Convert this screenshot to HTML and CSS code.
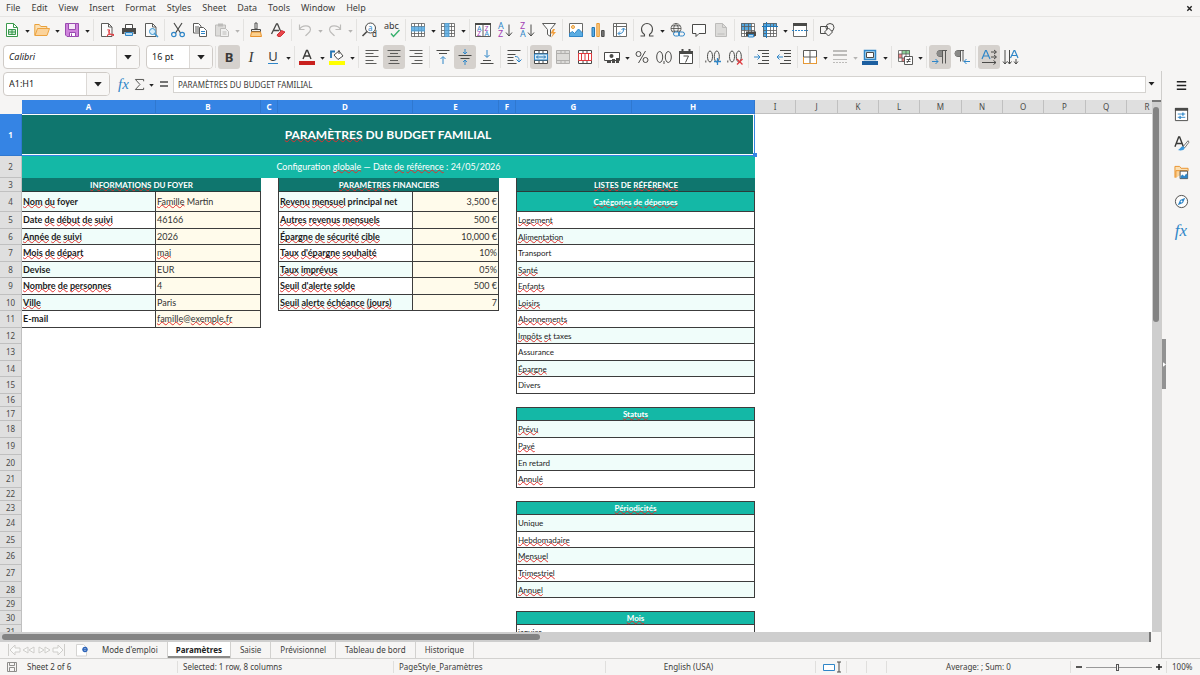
FILE: index.html
```html
<!DOCTYPE html>
<html lang="fr">
<head>
<meta charset="utf-8">
<title>Budget familial</title>
<link rel="stylesheet" href="styles.css">
</head>
<body>
<svg class="defs" aria-hidden="true">
  <symbol id="caret" viewBox="0 0 6 4"><path d="M0 0h6L3 3.6z" fill="currentColor"/></symbol>
  <symbol id="grid" viewBox="0 0 16 16"><path d="M1.500 1.500h13v13h-13zM1.500 4.500h13M1.500 8.500h13M1.500 11.500h13M4.500 1.500v13M8.500 1.500v13M11.500 1.500v13" fill="none" stroke="#5c5c5a" stroke-width=".800"/></symbol>
</svg>

<nav class="menubar">
  <button>File</button><button>Edit</button><button>View</button><button>Insert</button><button>Format</button><button>Styles</button><button>Sheet</button><button>Data</button><button>Tools</button><button>Window</button><button>Help</button>
  <button class="close" aria-label="Close"><svg viewBox="0 0 8 8"><path d="M1.500 1.500l5 5M6.500 1.500l-5 5" stroke="#222" stroke-width="1.600"/></svg></button>
</nav>

<div class="toolbar standard">
  <button class="tool" aria-label="New"><svg viewBox="0 0 16 16"><path d="M2.500 1.500h7l4 4v9h-11z" fill="#fff" stroke="#3c9a4c"/><path d="M9.500 1.500v4h4" fill="none" stroke="#3c9a4c"/><path d="M4.500 7.500h7v5h-7zM4.500 10h7M8 7.500v5" fill="#c9ecd0" stroke="#2b8f3f" stroke-width=".900"/></svg></button><button class="drop" aria-label="New options"><svg><use href="#caret"/></svg></button>
  <button class="tool" aria-label="Open"><svg viewBox="0 0 16 16"><path d="M.800 13.500v-11h4.500l1.500 2h6v2" fill="#fbe0b4" stroke="#e9a13b"/><path d="M1 13.500l2.500-7h12l-2.500 7z" fill="#fbd39b" stroke="#eda33f"/></svg></button><button class="drop" aria-label="Open options"><svg><use href="#caret"/></svg></button>
  <button class="tool" aria-label="Save"><svg viewBox="0 0 16 16"><path d="M1.500 1.500h13v13H3l-1.500-1.500z" fill="#cf83dc" stroke="#9a4bb0"/><path d="M4.500 1.500h7v6h-7z" fill="#f5e9f7" stroke="#9a4bb0"/><path d="M5.500 10.500h6v4h-6z" fill="#fff" stroke="#9a4bb0"/><path d="M7.500 11.500v3" stroke="#9a4bb0"/></svg></button><button class="drop" aria-label="Save options"><svg><use href="#caret"/></svg></button>
  <span class="sep"></span>
  <button class="tool" aria-label="Export PDF"><svg viewBox="0 0 16 16"><path d="M2.500 1.500h7l3.500 3.500v9.500H2.500z" fill="#fcfcfc" stroke="#5c5c5a"/><path d="M9.500 1.500V5H13" fill="none" stroke="#5c5c5a"/><path d="M9 7c.5 4 2 6 6 6.500M7.500 14.500C9.500 13 11 10 10.500 7.500M8 13.500c2-1.500 4-1.500 7-1" fill="none" stroke="#e0393e"/></svg></button>
  <button class="tool" aria-label="Print"><svg viewBox="0 0 16 16"><path d="M4.500 2.500h7v4h-7z" fill="#fff" stroke="#4a4a48"/><path d="M1 6h14v6h-2.500v-2h-9v2H1z" fill="#4a4a48"/><path d="M4.500 10.500h7v3h-7z" fill="#b9dcf3" stroke="#2f86c8"/></svg></button>
  <button class="tool" aria-label="Print preview"><svg viewBox="0 0 16 16"><path d="M2.500 1.500h7l3.500 3.500v9.500H2.500z" fill="#fcfcfc" stroke="#5c5c5a"/><path d="M9.500 1.500V5H13" fill="none" stroke="#5c5c5a"/><circle cx="9.500" cy="9.500" r="3" fill="#d9edf9" stroke="#3a94d0"/><path d="M11.500 11.500l3.500 3.500" stroke="#3a94d0" stroke-width="1.500"/></svg></button>
  <span class="sep"></span>
  <button class="tool" aria-label="Cut"><svg viewBox="0 0 16 16"><path d="M4 1l6.500 10M12 1L5.500 11" stroke="#4a4a48" stroke-width="1.200"/><circle cx="3.800" cy="12.500" r="2.200" fill="none" stroke="#2f86c8" stroke-width="1.200"/><circle cx="12.200" cy="12.500" r="2.200" fill="none" stroke="#2f86c8" stroke-width="1.200"/></svg></button>
  <button class="tool" aria-label="Copy"><svg viewBox="0 0 16 16"><path d="M1.500 1.500h5l2.500 2.500v7h-7.500zM3 5h4M3 7h4M3 9h4" fill="#fff" stroke="#5c5c5a"/><path d="M7.500 5.500h4l3 3v6h-7z" fill="#fff" stroke="#5c5c5a"/><path d="M9 9.500h4M9 11.500h4" stroke="#2f86c8"/></svg></button>
  <button class="tool" aria-label="Paste" disabled><svg viewBox="0 0 16 16"><path d="M1.500 3h10v11h-10z" fill="#dddcda" stroke="#bdbcba"/><path d="M4 1.500h5v3H4z" fill="#bdbcba"/><path d="M6.500 6.500h5l3 3v5h-8zM8.500 10h4M8.500 12h4" fill="#f0f0ef" stroke="#bdbcba"/></svg></button><button class="drop" aria-label="Paste options" disabled><svg><use href="#caret"/></svg></button>
  <span class="sep narrow"></span>
  <button class="tool" aria-label="Clone formatting"><svg viewBox="0 0 16 16"><path d="M7 1h2v6H7z" fill="#fff" stroke="#4a4a48"/><path d="M3.500 7.500h9v2h-9z" fill="#eee" stroke="#4a4a48"/><path d="M3.500 10h9l1 4.500h-11z" fill="#fbd08e" stroke="#e9922b"/></svg></button>
  <button class="tool" aria-label="Clear formatting"><svg viewBox="0 0 16 16"><path d="M1.500 12L6.500 2h1l3 7M3.500 8.500H9" fill="none" stroke="#4a4a48" stroke-width="1.300"/><path d="M7 13l4.500-4.500 3.500 1.500-4.500 4.500H8z" fill="#e8464b" stroke="#cf3036"/></svg></button>
  <span class="sep"></span>
  <button class="tool" aria-label="Undo" disabled><svg viewBox="0 0 16 16"><path d="M2.500 2.500v5h5M2.500 7.500C5 3 13 2.500 13.500 7.500c0 3-3 4-5 6.500" fill="none" stroke="#bdbcba" stroke-width="1.200"/></svg></button><button class="drop" aria-label="Undo options" disabled><svg><use href="#caret"/></svg></button>
  <button class="tool" aria-label="Redo" disabled><svg viewBox="0 0 16 16"><path d="M13.500 2.500v5h-5M13.500 7.500C11 3 3 2.500 2.500 7.500c0 3 3 4 5 6.500" fill="none" stroke="#bdbcba" stroke-width="1.200"/></svg></button><button class="drop" aria-label="Redo options" disabled><svg><use href="#caret"/></svg></button>
  <span class="sep"></span>
  <button class="tool" aria-label="Find and replace"><svg viewBox="0 0 16 16"><circle cx="8.500" cy="6" r="5" fill="#fdfdfd" stroke="#4a4a48"/><path d="M5 9.500l-4.500 4.500" stroke="#4a4a48" stroke-width="1.600"/><text x="6" y="8.500" font-size="8" fill="#2f86c8">a</text><text x="10" y="15" font-size="8" fill="#333">d</text></svg></button>
  <button class="tool" aria-label="Spelling"><svg viewBox="0 0 16 16"><text x="0" y="7" font-size="9" fill="#333">abc</text><path d="M7 11.500l2.500 3 6-6.500" fill="none" stroke="#36b06c" stroke-width="1.400"/></svg></button>
  <span class="sep narrow"></span>
  <button class="tool" aria-label="Row"><svg viewBox="0 0 16 16"><path d="M1 1h14v14H1z" fill="#fff"/><use href="#grid" width="16" height="16"/><path d="M1 4.500h14v5H1z" fill="#55a8e0" opacity=".85"/></svg></button><button class="drop" aria-label="Row options"><svg><use href="#caret"/></svg></button>
  <button class="tool" aria-label="Column"><svg viewBox="0 0 16 16"><path d="M1 1h14v14H1z" fill="#fff"/><use href="#grid" width="16" height="16"/><path d="M4.500 1h5v14h-5z" fill="#55a8e0" opacity=".85"/></svg></button><button class="drop" aria-label="Column options"><svg><use href="#caret"/></svg></button>
  <span class="sep"></span>
  <button class="tool" aria-label="Sort"><svg viewBox="0 0 16 16"><path d="M.500 1.500h15v13H.500zM8 1.500v13" fill="#fff" stroke="#5c5c5a"/><path d="M0 1h16v2H0z" fill="#4a4a48"/><text x="2" y="8.500" font-size="7" fill="#2f86c8">A</text><text x="2" y="14" font-size="7" fill="#a33fb5">Z</text><text x="9.500" y="8.500" font-size="7" fill="#a33fb5">Z</text><text x="9.500" y="14" font-size="7" fill="#2f86c8">A</text></svg></button>
  <button class="tool" aria-label="Sort ascending"><svg viewBox="0 0 16 16"><text x="1" y="7" font-size="9" fill="#2f86c8">A</text><text x="1" y="15" font-size="9" fill="#a33fb5">Z</text><path d="M12 2.500v11M9 10.500l3 3.500 3-3.500" fill="none" stroke="#4a4a48"/></svg></button>
  <button class="tool" aria-label="Sort descending"><svg viewBox="0 0 16 16"><text x="1" y="7" font-size="9" fill="#a33fb5">Z</text><text x="1" y="15" font-size="9" fill="#2f86c8">A</text><path d="M12 2.500v11M9 10.500l3 3.500 3-3.500" fill="none" stroke="#4a4a48"/></svg></button>
  <button class="tool" aria-label="AutoFilter"><svg viewBox="0 0 16 16"><path d="M1.500 1.500h13l-5 6v7l-3-2v-5z" fill="#fcfcfc" stroke="#5c5c5a"/><path d="M12 7l-2.500 4.500H12L10 16l5-6h-2.500L14 7z" fill="#f3a03e"/></svg></button>
  <span class="sep"></span>
  <button class="tool" aria-label="Insert image"><svg viewBox="0 0 16 16"><path d="M1.500 1.500h13v13h-13z" fill="#fff" stroke="#6a6a68"/><circle cx="5" cy="5" r="1.500" fill="#fcd9a0" stroke="#e99a34"/><path d="M1.500 14.500v-3l3-2 2 2 4-4.500 4 4v3.500z" fill="#5badE2" stroke="#2f86c8"/></svg></button>
  <button class="tool" aria-label="Insert chart"><svg viewBox="0 0 16 16"><path d="M2 5.500h2.500v9H2z" fill="#5bade2" stroke="#2374b3"/><path d="M6.800 1.500h2.500v13H6.800z" fill="#fbc983" stroke="#e99a34"/><path d="M11.600 8.500h2.500v6h-2.500z" fill="#777" stroke="#4a4a48"/></svg></button>
  <button class="tool" aria-label="Insert pivot table"><svg viewBox="0 0 16 16"><path d="M1.500 1.500h13v13h-13zM1.500 4.500h13M4.500 1.500v13" fill="#fff" stroke="#6a6a68"/><path d="M6.500 11.500c4 0 5-1 5-5M9.500 8l2-2 2 2M8 9.500l-2 2 2 2" fill="none" stroke="#2f86c8"/></svg></button>
  <span class="sep"></span>
  <button class="tool" aria-label="Special character"><svg viewBox="0 0 16 16"><path d="M1.500 14h4v-1.500C3 11 2.500 9 2.500 7a5.500 5.500 0 0 1 11 0c0 2-.5 4-3 5.500V14h4" fill="none" stroke="#4a4a48" stroke-width="1.100"/></svg></button><button class="drop" aria-label="More characters"><svg><use href="#caret"/></svg></button>
  <button class="tool" aria-label="Hyperlink"><svg viewBox="0 0 16 16"><path d="M7 1.500a5 5 0 1 0 .1 0M2 6.500h10M3 3.800h8M3 9.200h8M7 1.500c-3 3-3 7 0 10M7 1.500c3 3 3 7 0 10" fill="none" stroke="#4a4a48" stroke-width=".800"/><rect x="4.500" y="10" width="6" height="4" rx="2" fill="#f5f5f4" stroke="#2f86c8"/><rect x="9.500" y="10" width="6" height="4" rx="2" fill="none" stroke="#2f86c8"/></svg></button>
  <button class="tool" aria-label="Comment"><svg viewBox="0 0 16 16"><path d="M1.500 2.500h13v9H8L5 14.500v-3H1.500z" fill="#fcfcfc" stroke="#4a4a48"/></svg></button>
  <button class="tool" aria-label="Headers and footers" disabled><svg viewBox="0 0 16 16"><path d="M2.500 1.500h7l4 4v9h-11z" fill="#dcdbd9" stroke="#bdbcba"/><path d="M9.500 1.500v4h4M4.500 12h7" fill="none" stroke="#bdbcba"/></svg></button>
  <span class="sep"></span>
  <button class="tool" aria-label="Print area"><svg viewBox="0 0 16 16"><path d="M1 1h14v14H1z" fill="#fff"/><path d="M1 1h10v7H1z" fill="#55a8e0"/><use href="#grid" width="16" height="16"/><path d="M6 9.500h10V14H6z" fill="#4a4a48"/><path d="M8.500 12.500h5v2.500h-5z" fill="#b9dcf3" stroke="#2f86c8"/></svg></button>
  <button class="tool" aria-label="Freeze"><svg viewBox="0 0 16 16"><path d="M1 1h14v14H1z" fill="#fff"/><path d="M1 1h4v14H1zM1 1h14v3.500H1z" fill="#55a8e0"/><use href="#grid" width="16" height="16"/><path d="M4.500 0v16M0 4.500h16" stroke="#1b76ba"/></svg></button><button class="drop" aria-label="Freeze options"><svg><use href="#caret"/></svg></button>
  <button class="tool" aria-label="Split window"><svg viewBox="0 0 16 16"><path d="M1.500 2.500h13v12h-13z" fill="#fff" stroke="#6a6a68"/><path d="M1 1h14v3H1z" fill="#4a4a48"/><path d="M0 8.500h16" stroke="#2f86c8" stroke-dasharray="2 1"/></svg></button>
  <span class="sep"></span>
  <button class="tool" aria-label="Show draw functions"><svg viewBox="0 0 16 16"><path d="M1.500 4.500h7v7h-7z" fill="none" stroke="#4a4a48"/><circle cx="11" cy="5.500" r="4" fill="none" stroke="#4a4a48"/><path d="M9.500 6l4 4-4 4-4-4z" fill="#f6f5f4" stroke="#4a4a48"/></svg></button>
</div>

<div class="toolbar formatting">
  <div class="combo font-name"><input value="Calibri" aria-label="Font name"><button aria-label="Choose font"><svg><use href="#caret"/></svg></button></div>
  <div class="combo font-size"><input value="16 pt" aria-label="Font size"><button aria-label="Choose size"><svg><use href="#caret"/></svg></button></div>
  <span class="sep"></span>
  <button class="tool on bold" aria-pressed="true">B</button>
  <button class="tool italic">I</button>
  <button class="tool underline"><span>U</span></button><button class="drop" aria-label="Underline options"><svg><use href="#caret"/></svg></button>
  <span class="sep narrow"></span>
  <button class="tool" aria-label="Font color"><svg viewBox="0 0 16 16"><path d="M4 10L7.500 1.500h1L12 10M5.500 7h5" fill="none" stroke="#3a3a38" stroke-width="1.400"/><path d="M0 12h16v4H0z" fill="#c9211e"/></svg></button><button class="drop" aria-label="Font colors"><svg><use href="#caret"/></svg></button>
  <button class="tool" aria-label="Highlighting"><svg viewBox="0 0 16 16"><path d="M2 9V2.500h4" fill="none" stroke="#2374b3" stroke-width="1.800"/><path d="M5 6l5-4 4 5-5 3.500zM10 5V1" fill="#fff" stroke="#4a4a48"/><path d="M0 12h16v4H0z" fill="#ff0"/></svg></button><button class="drop" aria-label="Highlight colors"><svg><use href="#caret"/></svg></button>
  <span class="sep"></span>
  <button class="tool" aria-label="Align left"><svg viewBox="0 0 16 16"><path d="M1.500 1.500h13M1.500 4.500h8M1.500 7.500h13M1.500 11.500h8M1.500 14.500h11" stroke="#5c5c5a"/></svg></button>
  <button class="tool on" aria-label="Center"><svg viewBox="0 0 16 16"><path d="M1.500 1.500h13M4 4.500h8M1.500 7.500h13M4 11.500h8M2.500 14.500h11" stroke="#5c5c5a"/></svg></button>
  <button class="tool" aria-label="Align right"><svg viewBox="0 0 16 16"><path d="M1.500 1.500h13M6.500 4.500h8M1.500 7.500h13M6.500 11.500h8M3.500 14.500h11" stroke="#5c5c5a"/></svg></button>
  <span class="sep"></span>
  <button class="tool" aria-label="Align top"><svg viewBox="0 0 16 16"><path d="M1.500 1.500h13M4 4.500h8" stroke="#4a4a48"/><path d="M8 15V8M5.500 10L8 7.500l2.500 2.500" fill="none" stroke="#2f86c8"/></svg></button>
  <button class="tool on" aria-label="Center vertically"><svg viewBox="0 0 16 16"><path d="M1.500 6.500h13M3.500 9.500h9" stroke="#4a4a48"/><path d="M8 0v5M6 3l2 2 2-2M8 16v-5M6 13l2-2 2 2" fill="none" stroke="#2f86c8"/></svg></button>
  <button class="tool" aria-label="Align bottom"><svg viewBox="0 0 16 16"><path d="M1.500 14.500h13M4 11.500h8" stroke="#4a4a48"/><path d="M8 1v7M5.500 6L8 8.500 10.500 6" fill="none" stroke="#2f86c8"/></svg></button>
  <span class="sep"></span>
  <button class="tool" aria-label="Wrap text"><svg viewBox="0 0 16 16"><path d="M1.500 1.500h13M1.500 5.500h8M1.500 8.500h6M1.500 11.500h6M1.500 14.500h9" stroke="#4a4a48"/><path d="M9 7.500c4 0 4 2 4 5M10.500 10.500l2.500 2.500 2.500-2.500" fill="none" stroke="#2f86c8"/></svg></button>
  <span class="sep"></span>
  <button class="tool on" aria-label="Merge and center"><svg viewBox="0 0 16 16"><path d="M1.500 1.500h13v13h-13zM1.500 4.500h13M1.500 11.500h13M6 1.500v3M10 1.500v3M6 11.500v3M10 11.500v3" fill="#fff" stroke="#4a4a48"/><path d="M1.500 5h13v6h-13z" fill="#d4ebf9" stroke="#2f86c8"/><path d="M3.500 8h9M5 6.500L3.500 8 5 9.500M11 6.500L12.500 8 11 9.500" fill="none" stroke="#2374b3"/></svg></button>
  <button class="tool" aria-label="Merge cells" disabled><svg viewBox="0 0 16 16"><path d="M1.500 1.500h13v13h-13zM1.500 4.500h13M1.500 11.500h13M6 1.500v3M10 1.500v3M6 11.500v3M10 11.500v3" fill="#dcdbd9" stroke="#b0afad"/></svg></button>
  <button class="tool" aria-label="Unmerge cells"><svg viewBox="0 0 16 16"><path d="M1.500 1.500h13v13h-13zM1.500 4.500h13M1.500 11.500h13M6 1.500v3M10 1.500v3M6 11.500v3M10 11.500v3" fill="#fff" stroke="#4a4a48"/><path d="M1.500 4.500h13v7h-13zM4.500 4.500v7M8 4.500v7M11.500 4.500v7" fill="#fff" stroke="#e0393e"/></svg></button>
  <span class="sep"></span>
  <button class="tool" aria-label="Currency"><svg viewBox="0 0 16 16"><path d="M.500 3.500h15v8H.500z" fill="#fff" stroke="#4a4a48"/><circle cx="7.500" cy="7" r="2" fill="#4a4a48"/><path d="M3 11h4v3H3zM8 10h3v4H8zM12 9h3v5h-3z" fill="#4a4a48"/></svg></button><button class="drop" aria-label="Currency options"><svg><use href="#caret"/></svg></button>
  <button class="tool" aria-label="Percent"><svg viewBox="0 0 16 16"><circle cx="4.500" cy="5" r="2.500" fill="none" stroke="#4a4a48"/><circle cx="11.500" cy="11" r="2.500" fill="none" stroke="#4a4a48"/><path d="M11.500 2L4.500 14" stroke="#4a4a48"/></svg></button>
  <button class="tool" aria-label="Number"><svg viewBox="0 0 16 16"><ellipse cx="3.700" cy="8" rx="3" ry="5.500" fill="none" stroke="#4a4a48"/><ellipse cx="12.300" cy="8" rx="3" ry="5.500" fill="none" stroke="#4a4a48"/><path d="M8 12v3" stroke="#4a4a48"/></svg></button>
  <button class="tool" aria-label="Date"><svg viewBox="0 0 16 16"><path d="M1.500 2.500h13v12h-13z" fill="#fff" stroke="#4a4a48"/><path d="M1 2h14v3H1zM3.500 0h2v3h-2zM10.500 0h2v3h-2z" fill="#4a4a48"/><path d="M5.500 7h5l-3 6.500" fill="none" stroke="#4a4a48"/></svg></button>
  <span class="sep"></span>
  <button class="tool" aria-label="Add decimal place"><svg viewBox="0 0 16 16"><path d="M.800 11.500v2" stroke="#4a4a48"/><ellipse cx="5" cy="7.500" rx="2.500" ry="5.500" fill="none" stroke="#4a4a48"/><ellipse cx="11.800" cy="7.500" rx="2.500" ry="5.500" fill="none" stroke="#4a4a48"/><path d="M9 12.500h7M12.500 9v7" stroke="#2f86c8" stroke-width="1.300"/></svg></button>
  <button class="tool" aria-label="Delete decimal place"><svg viewBox="0 0 16 16"><path d="M.800 11.500v2" stroke="#4a4a48"/><ellipse cx="5" cy="7.500" rx="2.500" ry="5.500" fill="none" stroke="#4a4a48"/><ellipse cx="11.800" cy="7.500" rx="2.500" ry="5.500" fill="none" stroke="#4a4a48"/><path d="M10 10l5.500 5.500M15.500 10L10 15.500" stroke="#e0393e" stroke-width="1.300"/></svg></button>
  <span class="sep"></span>
  <button class="tool" aria-label="Increase indent"><svg viewBox="0 0 16 16"><path d="M4 1.500h11M8 4.500h7M8 7.500h7M8 11.500h7M4 14.500h11" stroke="#4a4a48"/><path d="M0 8h6M3.500 5.500L6 8l-2.500 2.500" fill="none" stroke="#2f86c8"/></svg></button>
  <button class="tool" aria-label="Decrease indent"><svg viewBox="0 0 16 16"><path d="M4 1.500h11M8 4.500h7M8 7.500h7M8 11.500h7M4 14.500h11" stroke="#4a4a48"/><path d="M7 8H1M3.500 5.500L1 8l2.500 2.500" fill="none" stroke="#2f86c8"/></svg></button>
  <span class="sep narrow"></span>
  <button class="tool" aria-label="Borders"><svg viewBox="0 0 16 16"><path d="M1.500 1.500h13v13h-13z" fill="#fff" stroke="#5c5c5a"/><path d="M1.500 8v6.500h13V8" fill="none" stroke="#e99a34"/><path d="M8 2v12M2 8h12" stroke="#5c5c5a"/></svg></button><button class="drop" aria-label="Border options"><svg><use href="#caret"/></svg></button>
  <button class="tool" aria-label="Border style" disabled><svg viewBox="0 0 16 16"><path d="M1 2h14M1 6h14" stroke="#bdbcba" stroke-width="2"/><path d="M1 10.500h14" stroke="#bdbcba"/><path d="M1 13.500h14" stroke="#bdbcba" stroke-dasharray="2 1"/></svg></button><button class="drop" aria-label="Border style options" disabled><svg><use href="#caret"/></svg></button>
  <button class="tool" aria-label="Border color"><svg viewBox="0 0 16 16"><path d="M2.500 1.500h11v9h-11z" fill="#b9dcf3" stroke="#2f86c8" stroke-width="1.500"/><path d="M4.500 3.500h7v5h-7z" fill="#fff" stroke="#4a4a48"/><path d="M0 12h16v4H0z" fill="#1c5fa0"/></svg></button><button class="drop" aria-label="Border colors"><svg><use href="#caret"/></svg></button>
  <span class="sep"></span>
  <button class="tool" aria-label="Conditional formatting"><svg viewBox="0 0 16 16"><path d="M1 1h12v12H1z" fill="#fff"/><path d="M5 1h8v4H5z" fill="#8fd49b"/><path d="M1 5h4v4H1zM5 9h4v4H5z" fill="#f0868a"/><path d="M1.500 1.500h11v11h-11zM1.500 5h11M1.500 9h11M5 1.500v11M9 1.500v11" fill="none" stroke="#5a5a58" stroke-width=".800"/><path d="M7.500 7.500h8v8h-8zM9.500 10.500h4M9.500 12.500h4M10 14l3-5" fill="#fff" stroke="#4a4a48" stroke-width=".900"/></svg></button><button class="drop" aria-label="Conditional options"><svg><use href="#caret"/></svg></button>
  <span class="sep"></span>
  <button class="tool on" aria-label="Left to right"><svg viewBox="0 0 16 16"><path d="M15 1.500H8a3 3 0 0 0 0 6h2M10.500 1.500v13M13.500 1.500v13" fill="none" stroke="#5a5a58"/><path d="M8 1.500a3 3 0 0 0 0 6h2v-6z" fill="#8a8a88"/><path d="M0 12.500h6M3.500 10L6 12.500 3.500 15" fill="none" stroke="#2f86c8"/></svg></button>
  <button class="tool" aria-label="Right to left"><svg viewBox="0 0 16 16"><path d="M10 1.500H4a3 3 0 0 0 0 6h2M6.500 1.500v11M9 1.500v11" fill="none" stroke="#5a5a58"/><path d="M4 1.500a3 3 0 0 0 0 6h2v-6z" fill="#8a8a88"/><path d="M16 12.500h-6M12.500 10L10 12.500l2.500 2.500" fill="none" stroke="#2f86c8"/></svg></button>
  <span class="sep"></span>
  <button class="tool on" aria-label="Horizontal text"><svg viewBox="0 0 16 16"><path d="M1 10L4.500 1.500h.800L9 10M2.500 7h5" fill="none" stroke="#2f86c8" stroke-width="1.200"/><path d="M10 3h5M13 1l2.500 2L13 5M10 8h5M13 6l2.500 2L13 10M1 13.500h14M12.500 11.500l2.500 2-2.500 2" fill="none" stroke="#4a4a48"/></svg></button>
  <button class="tool" aria-label="Vertical text"><svg viewBox="0 0 16 16"><path d="M7.500 9L11 1.500h.800L15 9M9 6.500h5" fill="none" stroke="#2f86c8" stroke-width="1.200"/><path d="M2 1v14M0 12.500L2 15l2-2.500M6.500 1v14M4.500 12.500l2 2.500 2-2.500M13 10v5M11 12.500l2 2.500 2-2.500" fill="none" stroke="#4a4a48"/></svg></button>
</div>

<main class="workspace">
  <section class="document">
    <div class="formula-bar">
      <div class="combo name-box"><input value="A1:H1" aria-label="Name box"><button aria-label="Cell names"><svg><use href="#caret"/></svg></button></div>
      <button class="fx" aria-label="Function wizard">fx</button>
      <button class="sigma" aria-label="Sum"><svg viewBox="0 0 12 14"><path d="M10.500 3.500v-2h-9l5 5.500-5 5.500h9v-2" fill="none" stroke="#4a4a48"/></svg></button>
      <button class="drop" aria-label="Sum options"><svg><use href="#caret"/></svg></button>
      <button class="equals" aria-label="Formula"><svg viewBox="0 0 10 10"><path d="M1 3h8M1 7h8" stroke="#4a4a48" stroke-width="1.500"/></svg></button>
      <input class="formula" value="PARAMÈTRES DU BUDGET FAMILIAL" aria-label="Input line">
      <button class="expand" aria-label="Expand formula bar"><svg><use href="#caret"/></svg></button>
    </div>

    <div class="sheet-area">
      <div class="sheet">
        <table>
          <colgroup><col class="w-rh"><col class="w-a"><col class="w-b"><col class="w-c"><col class="w-d"><col class="w-e"><col class="w-f"><col class="w-g"><col class="w-h"><col class="w-n"><col class="w-m"><col class="w-n"><col class="w-n"><col class="w-m"><col class="w-n"><col class="w-n"><col class="w-m"><col class="w-n"><col class="w-n"></colgroup>
          <thead><tr><td class="corner"></td><th class="sel">A</th><th class="sel">B</th><th class="sel">C</th><th class="sel">D</th><th class="sel">E</th><th class="sel">F</th><th class="sel">G</th><th class="sel">H</th><th>I</th><th>J</th><th>K</th><th>L</th><th>M</th><th>N</th><th>O</th><th>P</th><th>Q</th><th>R</th></tr></thead>
          <tbody>
            <tr class="h42"><th class="sel">1</th><td colspan="8" class="title"><u>PARAMÈTRES</u> DU BUDGET FAMILIAL<i class="handle"></i></td></tr>
            <tr class="h22"><th>2</th><td colspan="8" class="subtitle">Configuration <u>globale</u> — Date <u>de</u> <u>référence</u> : 24/05/2026</td></tr>
            <tr class="h14"><th>3</th><td colspan="2" class="section"><u>INFORMATIONS</u> DU FOYER</td><td></td><td colspan="2" class="section edge"><u>PARAMÈTRES</u> FINANCIERS</td><td></td><td colspan="2" class="section edge"><u>LISTES</u> DE <u>RÉFÉRENCE</u></td></tr>
            <tr class="h20"><th>4</th><td class="label alt"><u>Nom</u> <u>du</u> foyer</td><td class="value"><u>Famille</u> Martin</td><td></td><td class="label alt edge"><u>Revenu</u> <u>mensuel</u> principal net</td><td class="value num">3,500 €</td><td></td><td colspan="2" class="list-head edge"><u>Catégories</u> <u>de</u> <u>dépenses</u></td></tr>
            <tr class="h17"><th>5</th><td class="label">Date <u>de</u> <u>début</u> <u>de</u> <u>suivi</u></td><td class="value">46166</td><td></td><td class="label edge"><u>Autres</u> <u>revenus</u> <u>mensuels</u></td><td class="value num">500 €</td><td></td><td colspan="2" class="item edge"><u>Logement</u></td></tr>
            <tr class="h16"><th>6</th><td class="label alt"><u>Année</u> <u>de</u> <u>suivi</u></td><td class="value">2026</td><td></td><td class="label alt edge"><u>Épargne</u> <u>de</u> <u>sécurité</u> <u>cible</u></td><td class="value num">10,000 €</td><td></td><td colspan="2" class="item alt edge"><u>Alimentation</u></td></tr>
            <tr class="h17"><th>7</th><td class="label"><u>Mois</u> <u>de</u> <u>départ</u></td><td class="value"><u>mai</u></td><td></td><td class="label edge"><u>Taux</u> <u>d'épargne</u> <u>souhaité</u></td><td class="value num">10%</td><td></td><td colspan="2" class="item edge">Transport</td></tr>
            <tr class="h16"><th>8</th><td class="label alt">Devise</td><td class="value">EUR</td><td></td><td class="label alt edge"><u>Taux</u> <u>imprévus</u></td><td class="value num">05%</td><td></td><td colspan="2" class="item alt edge"><u>Santé</u></td></tr>
            <tr class="h17"><th>9</th><td class="label"><u>Nombre</u> <u>de</u> <u>personnes</u></td><td class="value">4</td><td></td><td class="label edge"><u>Seuil</u> <u>d'alerte</u> <u>solde</u></td><td class="value num">500 €</td><td></td><td colspan="2" class="item edge"><u>Enfants</u></td></tr>
            <tr class="h16"><th>10</th><td class="label alt"><u>Ville</u></td><td class="value">Paris</td><td></td><td class="label alt edge"><u>Seuil</u> <u>alerte</u> <u>échéance</u> <u>(jours)</u></td><td class="value num">7</td><td></td><td colspan="2" class="item alt edge"><u>Loisirs</u></td></tr>
            <tr class="h17"><th>11</th><td class="label">E-mail</td><td class="value"><u>famille</u>@<u>exemple.fr</u></td><td colspan="4"></td><td colspan="2" class="item edge"><u>Abonnements</u></td></tr>
            <tr class="h16"><th>12</th><td colspan="6"></td><td colspan="2" class="item alt edge"><u>Impôts</u> <u>et</u> taxes</td></tr>
            <tr class="h17"><th>13</th><td colspan="6"></td><td colspan="2" class="item edge">Assurance</td></tr>
            <tr class="h16"><th>14</th><td colspan="6"></td><td colspan="2" class="item alt edge"><u>Épargne</u></td></tr>
            <tr class="h17"><th>15</th><td colspan="6"></td><td colspan="2" class="item edge">Divers</td></tr>
            <tr class="h13"><th>16</th><td colspan="8"></td></tr>
            <tr class="h14"><th>17</th><td colspan="6"></td><td colspan="2" class="list-head top edge"><u>Statuts</u></td></tr>
            <tr class="h17"><th>18</th><td colspan="6"></td><td colspan="2" class="item alt edge"><u>Prévu</u></td></tr>
            <tr class="h17"><th>19</th><td colspan="6"></td><td colspan="2" class="item edge"><u>Payé</u></td></tr>
            <tr class="h16"><th>20</th><td colspan="6"></td><td colspan="2" class="item alt edge">En retard</td></tr>
            <tr class="h17"><th>21</th><td colspan="6"></td><td colspan="2" class="item edge"><u>Annulé</u></td></tr>
            <tr class="h13"><th>22</th><td colspan="8"></td></tr>
            <tr class="h14"><th>23</th><td colspan="6"></td><td colspan="2" class="list-head top edge"><u>Périodicités</u></td></tr>
            <tr class="h17"><th>24</th><td colspan="6"></td><td colspan="2" class="item alt edge">Unique</td></tr>
            <tr class="h16"><th>25</th><td colspan="6"></td><td colspan="2" class="item edge"><u>Hebdomadaire</u></td></tr>
            <tr class="h17"><th>26</th><td colspan="6"></td><td colspan="2" class="item alt edge"><u>Mensuel</u></td></tr>
            <tr class="h17"><th>27</th><td colspan="6"></td><td colspan="2" class="item edge"><u>Trimestriel</u></td></tr>
            <tr class="h16"><th>28</th><td colspan="6"></td><td colspan="2" class="item alt edge"><u>Annuel</u></td></tr>
            <tr class="h13"><th>29</th><td colspan="8"></td></tr>
            <tr class="h14"><th>30</th><td colspan="6"></td><td colspan="2" class="list-head top edge"><u>Mois</u></td></tr>
            <tr class="h14"><th>31</th><td colspan="6"></td><td colspan="2" class="item edge"><u>janvier</u></td></tr>
          </tbody>
        </table>
      </div>
      <div class="vscroll"><div class="thumb"></div></div>
    </div>
    <div class="hscroll"><div class="thumb"></div></div>

    <div class="tabs">
      <div class="tab-nav">
        <button aria-label="First sheet"><svg viewBox="0 0 14 14"><path d="M1.500 1v12M3 7l5-5v3h5v4H8v3z" fill="#fafaf9" stroke="#cfcecb"/></svg></button>
        <button aria-label="Previous sheet"><svg viewBox="0 0 14 14"><path d="M1 7l5-3v6zM7 7l5-3v6z" fill="#fafaf9" stroke="#cfcecb"/></svg></button>
        <button aria-label="Next sheet"><svg viewBox="0 0 14 14"><path d="M13 7L8 4v6zM7 7L2 4v6z" fill="#fafaf9" stroke="#cfcecb"/></svg></button>
        <button aria-label="Last sheet"><svg viewBox="0 0 14 14"><path d="M12.500 1v12M11 7L6 2v3H1v4h5v3z" fill="#fafaf9" stroke="#cfcecb"/></svg></button>
      </div>
      <button class="add-sheet" aria-label="Add sheet"><svg viewBox="0 0 14 14"><path d="M1.500 1.500h7l3 3v8.500h-10z" fill="#fff" stroke="#d5d4d2"/><circle cx="10" cy="6.500" r="2" fill="#fff" stroke="#2a62b8" stroke-width="1.300"/><path d="M10 4v5M7.500 6.500h5" stroke="#2a62b8" stroke-width=".800"/></svg></button>
      <button class="tab">Mode d'emploi</button><button class="tab active">Paramètres</button><button class="tab">Saisie</button><button class="tab">Prévisionnel</button><button class="tab">Tableau de bord</button><button class="tab">Historique</button>
    </div>
  </section>

  <aside class="sidebar">
    <button class="collapse" aria-label="Collapse sidebar"><svg viewBox="0 0 4 6"><path d="M0 0l4 3-4 3z" fill="#fff"/></svg></button>
    <button class="deck" aria-label="Sidebar settings"><svg viewBox="0 0 16 16"><path d="M3 4h10M3 8h10M3 12h10" stroke="#222" stroke-width="1.500"/></svg></button>
    <button class="deck" aria-label="Properties"><svg viewBox="0 0 16 16"><path d="M1.500 1.500h13v13h-13z" fill="#fff" stroke="#4a4a48"/><path d="M1 1h14v3H1z" fill="#4a4a48"/><path d="M4 7.500h8M4 11h8" stroke="#2f86c8"/><path d="M9.500 5.800v3.400M6.500 9.300v3.400" stroke="#2f86c8" stroke-width="1.400"/></svg></button>
    <button class="deck" aria-label="Styles"><svg viewBox="0 0 16 16"><path d="M1 11.500L5 1h1l4 10.500M2.500 8h6" fill="none" stroke="#3a3a38" stroke-width="1.500"/><path d="M15 5l-5 6 1.500 1.500L16 6.500z" fill="#fff" stroke="#4a4a48" stroke-width=".800"/><path d="M4 15c2 0 3-4 6-4l1.500 1.500C11 15.500 7 16 4 15z" fill="#3d9ade"/></svg></button>
    <button class="deck" aria-label="Gallery"><svg viewBox="0 0 16 16"><path d="M1 13.500v-12h5l1.500 2H15v3" fill="#fbe0b4" stroke="#e9922b"/><path d="M2 13.500V6h12" fill="#fcd49a" stroke="#e9922b"/><path d="M6.500 6.500h8v8h-8z" fill="#fff" stroke="#4a4a48"/><path d="M7 14v-2l2-2 2 2 2-3 1.500 2v3z" fill="#2f86c8"/></svg></button>
    <button class="deck" aria-label="Navigator"><svg viewBox="0 0 16 16"><circle cx="8" cy="8" r="6.500" fill="#fdfdfd" stroke="#4a4a48"/><path d="M12 4L9.500 9.500 4 12l2.500-5.500z" fill="#2f86c8"/><circle cx="8" cy="8" r="1" fill="#fff"/></svg></button>
    <button class="deck fx" aria-label="Functions">fx</button>
  </aside>
</main>

<footer class="status">
  <span class="saved"><svg viewBox="0 0 12 12"><path d="M1.500 1.500h9v9h-9zM3.500 1.500v3h5v-3M3.500 10.500v-4h5v4" fill="none" stroke="#8e8d8b"/></svg></span>
  <span class="count">Sheet 2 of 6</span>
  <span class="selection">Selected: 1 row, 8 columns</span>
  <span class="style">PageStyle_Paramètres</span>
  <span class="lang">English (USA)</span>
  <span class="mode"><svg viewBox="0 0 22 12"><path d="M1.500 3.500h11v6h-11z" fill="#fff" stroke="#2f86c8"/><path d="M15 1h4M15 11h4M17 1v10" stroke="#4a4a48"/></svg></span>
  <span class="slot"></span><span class="slot"></span>
  <span class="sum">Average: ; Sum: 0</span>
  <span class="zoom"><button aria-label="Zoom out"><svg viewBox="0 0 8 8"><path d="M1 4h6" stroke="#222" stroke-width="1.500"/></svg></button><input type="range" min="0" max="100" value="49" aria-label="Zoom"><button aria-label="Zoom in"><svg viewBox="0 0 8 8"><path d="M1 4h6M4 1v6" stroke="#222" stroke-width="1.500"/></svg></button></span>
  <span class="percent">100%</span>
</footer>
</body>
</html>
```
FILE: styles.css
```css
* { box-sizing: border-box; }
body {
  margin: 0;
  height: 100vh;
  display: flex;
  flex-direction: column;
  overflow: hidden;
  background: #f6f5f4;
  color: #3d3d3b;
  font: 8px/12px "Noto Sans", sans-serif;
}
button, input { font: inherit; color: inherit; }
button { display: flex; align-items: center; justify-content: center; padding: 0; border: 0; background: none; }
svg { display: block; overflow: visible; }
.defs { position: absolute; width: 0; height: 0; }

.menubar { display: flex; align-items: center; gap: 1px; height: 17px; padding-left: 1px; border-bottom: 1px solid #e6e5e3; font-size: 9px; }
.menubar button { padding: 0 5px; }
.menubar .close { margin-left: auto; width: 22px; }
.close svg { width: 7px; height: 7px; }

.toolbar { display: flex; align-items: center; height: 27px; padding: 0 0 1px 1px; }
.tool { width: 22px; height: 24px; flex: none; border-radius: 3px; }
.tool svg { width: 16px; height: 16px; }
.tool.on { background: #d5d1cd; }
.drop { width: 8px; height: 24px; flex: none; padding-top: 2px; color: #222; }
.drop svg { width: 5px; height: 3px; }
.drop:disabled { color: #b5b4b2; }
.sep { width: 5px; height: 22px; flex: none; background: linear-gradient(#e3e2e0, #e3e2e0) center / 1px 100% no-repeat; }
.sep.narrow { width: 4px; }
.formatting { padding-left: 3px; }
.bold, .italic, .underline { font-size: 13px; line-height: 16px; color: #3a3a38; }
.bold { font-weight: 700; }
.italic { font-family: "Liberation Serif", serif; font-style: italic; font-size: 15px; }
.underline span { border-bottom: 1px solid #2f86c8; line-height: 13px; }

.combo { display: flex; height: 24px; border: 1px solid #cfcbc7; border-radius: 4px; background: #fff; overflow: hidden; flex: none; }
.combo input { flex: 1; min-width: 0; border: 0; padding: 0 5px; background: none; font-size: 9px; color: #222; }
.combo button { width: 23px; border-left: 1px solid #dcd9d6; background: #f8f7f6; color: #222; }
.combo svg { width: 8px; height: 5px; }
.font-name { width: 137px; margin-right: 6px; }
.font-name input { font-style: italic; }
.font-size { width: 67px; }

.workspace { flex: 1; display: flex; min-height: 0; }
.document { flex: 1; min-width: 0; display: flex; flex-direction: column; border-right: 1px solid #cfcecc; }
.formula-bar { display: flex; align-items: center; height: 29px; padding: 0 4px 3px 3px; }
.name-box { width: 107px; margin-right: 6px; }
.fx { width: 15px; font: italic 15px/18px "Liberation Serif", serif; color: #2f86c8; }
.sigma { width: 16px; }
.sigma svg { width: 11px; height: 13px; }
.equals { width: 18px; }
.equals svg { width: 10px; height: 10px; }
.formula { flex: 1; min-width: 0; height: 17px; padding: 0 4px; border: 1px solid #d5d3d0; background: #fff; }
.expand { width: 11px; color: #222; }
.expand svg { width: 7px; height: 4px; }

.sheet-area { flex: 1; display: flex; min-height: 0; }
.sheet { flex: 1; min-width: 0; overflow: hidden; background: #fff; }
.sheet table { table-layout: fixed; width: 0; border-collapse: separate; border-spacing: 0; font-family: Lato, sans-serif; color: #1c1c1c; }
.w-rh { width: 22px; } .w-a { width: 134px; } .w-b { width: 105px; } .w-c { width: 17px; } .w-d { width: 135px; }
.w-e { width: 86px; } .w-f { width: 17px; } .w-g { width: 116px; } .w-h { width: 123px; } .w-n { width: 41px; } .w-m { width: 42px; }
.sheet th, .sheet td { padding: 0 1px; white-space: nowrap; line-height: 12px; vertical-align: middle; }
.sheet th { padding: 0; background: #dfdfdf; border-right: 1px solid #c0c0c0; border-bottom: 1px solid #c0c0c0; font: 8px/12px "Noto Sans", sans-serif; color: #4a4a48; text-align: center; }
.sheet th.sel { background: #3584e4; border-color: #2f78d0; color: #fff; font-weight: 700; }
.sheet thead tr { height: 14px; }
.sheet .corner { background: #f6f5f4; }
.h13 { height: 13px; } .h14 { height: 14px; } .h16 { height: 16px; } .h17 { height: 17px; } .h20 { height: 20px; } .h22 { height: 22px; } .h42 { height: 42px; }
.sheet u { text-decoration: underline wavy #e0302e 1px; text-decoration-skip-ink: none; text-underline-offset: -1px; }
.sheet .title { position: relative; background: #0f766e; border-top: 1px solid #fff; border-bottom: 1px solid #3584e4; border-right: 1px solid #3584e4; box-shadow: inset -1px -1px #fff; color: #fff; font-size: 12px; line-height: 18px; font-weight: 700; text-align: center; padding-bottom: 1px; }
.handle { position: absolute; right: -3px; bottom: -2px; width: 4px; height: 4px; background: #3584e4; }
.sheet .subtitle { background: #14b8a6; color: #fff; font-size: 9px; text-align: center; }
.sheet .section { background: #0f766e; color: #fff; font-size: 8px; font-weight: 700; text-align: center; border-bottom: 1px solid #2b3b3a; }
.sheet .list-head { background: #14b8a6; color: #fff; font-size: 8px; font-weight: 700; text-align: center; }
.label, .value { font-size: 9px; }
.label { font-weight: 700; }
.value { background: #fffbeb; color: #333; }
.num { text-align: right; }
.item { font-size: 8px; }
.alt { background: #f0fdfa; }
.label, .value, .item, .list-head { border-right: 1px solid #3c3c3c; border-bottom: 1px solid #3c3c3c; }
.edge { border-left: 1px solid #3c3c3c; }
.top { border-top: 1px solid #3c3c3c; }

.vscroll { width: 9px; padding: 5px 2px 0 1px; background: #cecece; border-top: 2px solid #777; }
.vscroll .thumb { height: 41%; border-radius: 3px; background: #838383; }
.hscroll { height: 10px; margin-right: 10px; padding: 2px; background: #cecece; border-right: 2px solid #777; }
.hscroll .thumb { width: 47%; height: 6px; border-radius: 3px; background: #838383; }

.tabs { display: flex; height: 16px; }
.tab-nav { display: flex; width: 60px; margin: 0 8px 0 6px; }
.tab-nav button { width: 15px; }
.tab-nav svg, .add-sheet svg { width: 14px; height: 14px; }
.add-sheet { width: 16px; margin-right: 3px; }
.tab { padding: 0 9px; border-right: 1px solid #d2d1cf; }
.tab.active { background: #fff; box-shadow: inset 0 -2px #8a8a88; font-weight: 700; color: #222; padding: 0 8px; }

.sidebar { position: relative; width: 38px; display: flex; flex-direction: column; align-items: center; }
.deck { width: 24px; height: 29px; }
.deck svg { width: 15px; height: 15px; }
.deck.fx { font-size: 17px; }
.collapse { position: absolute; left: 0; top: 268px; width: 4px; height: 50px; background: #929292; }
.collapse svg { width: 3px; height: 5px; }

.status { display: flex; align-items: center; height: 17px; border-top: 1px solid #d2d1cf; }
.status > span { height: 12px; border-right: 1px solid #e0dfdd; flex: none; }
.status .saved { width: 27px; padding-left: 6px; border: 0; }
.saved svg { width: 12px; height: 12px; }
.status .count { width: 151px; }
.status .selection { width: 216px; padding-left: 5px; }
.status .style { width: 212px; padding-left: 5px; }
.status .lang { flex: 1; min-width: 0; padding-right: 44px; text-align: center; }
.status .mode { width: 31px; padding-left: 6px; }
.mode svg { width: 22px; height: 12px; }
.status .slot { width: 20px; }
.status .sum { width: 184px; text-align: center; }
.status .zoom { display: flex; align-items: center; justify-content: center; gap: 3px; width: 96px; }
.zoom button { width: 8px; }
.zoom svg { width: 8px; height: 8px; }
.zoom input { width: 66px; height: 10px; margin: 0; appearance: none; background: linear-gradient(#999, #999) center / 100% 1px no-repeat; }
.zoom input::-webkit-slider-thumb { appearance: none; width: 3px; height: 7px; border: 1px solid #555; background: #f6f5f4; }
.status .percent { width: 33px; padding-left: 5px; border: 0; }
```
